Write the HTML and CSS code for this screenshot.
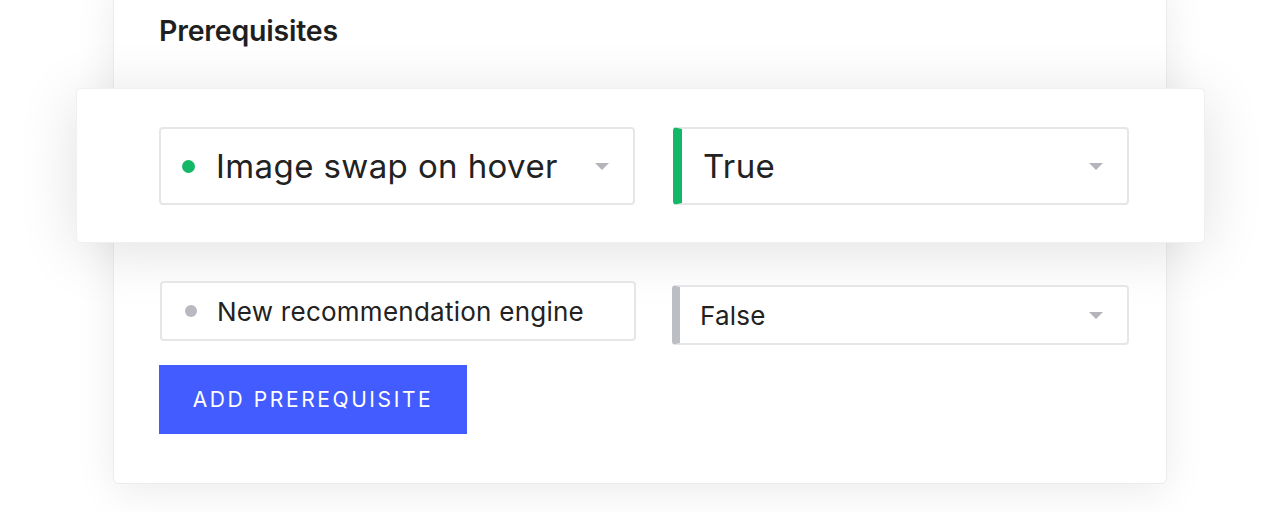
FILE: index.html
```html
<!DOCTYPE html>
<html lang="en">

<head>
    <meta charset="UTF-8">
    <meta name="viewport" content="width=device-width, initial-scale=1.0">
    <title>Prerequisites</title>
    <link rel="stylesheet" href="styles.css">
</head>

<body>

    <div class="card">
        <h2 class="card-title">Prerequisites</h2>

        <!-- row being edited, lifted above the card -->
        <div class="popup">
            <div class="row">
                <div class="select select-large">
                    <span class="dot dot-on"></span>
                    <span class="select-text">Image swap on hover</span>
                    <span class="caret"></span>
                </div>
                <div class="select select-large value value-on">
                    <span class="select-text">True</span>
                    <span class="caret"></span>
                </div>
            </div>
        </div>

        <div class="row row-small">
            <div class="select select-small">
                <span class="dot dot-off"></span>
                <span class="select-text">New recommendation engine</span>
            </div>
            <div class="select select-small value value-off">
                <span class="select-text">False</span>
                <span class="caret"></span>
            </div>
        </div>

        <button type="button" class="add-btn">Add prerequisite</button>
    </div>

</body>

</html>
```

FILE: styles.css
```css
body {
    font-family: 'Inter', 'Liberation Sans', sans-serif;
    background-color: #fff;
    margin: 0;
    padding: 0;
    color: #222;
    height: 512px;
    overflow: hidden;
}

.card {
    width: 1054px;
    margin: -20px 0 0 113px;
    padding: 20px 37px 49px 46px;
    box-sizing: border-box;
    background-color: #fff;
    border: 1px solid #ececec;
    border-radius: 6px;
    box-shadow: 0 8px 40px rgba(0, 0, 0, 0.08);
}

.card-title {
    font-size: 28.5px;
    font-weight: 600;
    margin: 14px 0 0 -1px;
    line-height: 32px;
    color: #1f1f1f;
    letter-spacing: -0.2px;
}

.popup {
    margin: 41px -76px 0 -84px;
    padding: 38px 75px 37px 82px;
    background-color: #fff;
    border: 1px solid #f0f0f0;
    border-radius: 5px;
    box-shadow: 0 8px 60px rgba(0, 0, 0, 0.12);
}

.row {
    display: grid;
    grid-template-columns: 476px 1fr;
    column-gap: 38px;
    align-items: start;
}

.row-small {
    margin-top: 38px;
    column-gap: 36px;
}

.select {
    display: flex;
    align-items: center;
    box-sizing: border-box;
    border: 2px solid #e6e6e8;
    border-radius: 4px;
    background-color: #fff;
}

.select-large {
    height: 78px;
    padding: 0 24px 0 21px;
    font-size: 33px;
}

.select-small {
    height: 60px;
    padding: 0 24px 0 23px;
    font-size: 26px;
}

.select-text {
    flex: 1;
    letter-spacing: 0.4px;
}

.select-small .select-text {
    letter-spacing: 0.25px;
}

.dot {
    border-radius: 50%;
    flex-shrink: 0;
}

.dot-on {
    width: 13px;
    height: 13px;
    background-color: #12b866;
    margin-right: 21px;
}

.dot-off {
    width: 12px;
    height: 12px;
    background-color: #b9b9c1;
    margin-right: 20px;
}

.value {
    border-left-width: 9px;
}

.value-on {
    border-left-color: #12b866;
    padding-left: 21px;
}

.value-off {
    border-left-color: #bdbdc4;
    border-left-width: 8px;
    margin-top: 4px;
    padding-left: 20px;
}

.caret {
    width: 0;
    height: 0;
    border-left: 7px solid transparent;
    border-right: 7px solid transparent;
    border-top: 7px solid #b4b4bb;
    margin-left: 12px;
}

.add-btn {
    display: block;
    margin: 20px 0 0 -1px;
    width: 308px;
    height: 69px;
    background-color: #425cff;
    color: #fff;
    border: none;
    font-family: 'Inter', 'Liberation Sans', sans-serif;
    font-size: 21px;
    letter-spacing: 2.6px;
    text-transform: uppercase;
    cursor: pointer;
}
```
